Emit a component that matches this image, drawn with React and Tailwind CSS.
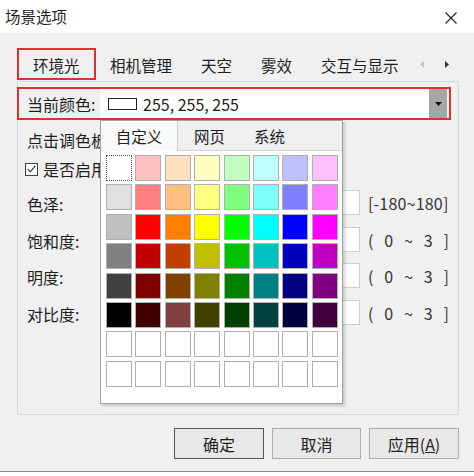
import React from "react";

const palette = [
  ["#ffffff", "#ffc0c0", "#ffe0c0", "#ffffc0", "#c0ffc0", "#c0ffff", "#c0c0ff", "#ffc0ff"],
  ["#e0e0e0", "#ff8080", "#ffc080", "#ffff80", "#80ff80", "#80ffff", "#8080ff", "#ff80ff"],
  ["#c0c0c0", "#ff0000", "#ff8000", "#ffff00", "#00ff00", "#00ffff", "#0000ff", "#ff00ff"],
  ["#808080", "#c00000", "#c04000", "#c0c000", "#00c000", "#00c0c0", "#0000c0", "#c000c0"],
  ["#404040", "#800000", "#804000", "#808000", "#008000", "#008080", "#000080", "#800080"],
  ["#000000", "#400000", "#804040", "#404000", "#004000", "#004040", "#000040", "#400040"],
  Array(8).fill("#ffffff"),
  Array(8).fill("#ffffff"),
];

const tabs = ["相机管理", "天空", "雾效", "交互与显示"];

const fields = [
  { label: "色泽:", range: "wide", mt: "mt-[11px]" },
  { label: "饱和度:", range: "narrow", mt: "mt-[12px]" },
  { label: "明度:", range: "narrow", mt: "mt-[11px]" },
  { label: "对比度:", range: "narrow", mt: "mt-[12px]" },
];

const ColorPopup = () => (
  <div className="absolute left-[82px] top-[38px] z-10 h-[284px] w-[243px] border border-[#a3a3a3] bg-white shadow-[2px_2px_3px_rgba(0,0,0,0.18)]">
    <div className="flex h-[30px] border-b border-[#d4d4d4] bg-[#efefef] text-[15.5px]">
      <div className="-mb-px flex w-[77px] items-center justify-center border-r border-[#cdcdcd] bg-[#f9f9f9] pt-[2px]">
        自定义
      </div>
      <div className="ml-[16px] flex items-center pt-[2px]">网页</div>
      <div className="ml-[29px] flex items-center pt-[2px]">系统</div>
    </div>
    <div className="grid grid-cols-[repeat(8,26px)] gap-[3.4px] pl-[5px] pt-[4px]">
      {palette.flatMap((row, r) =>
        row.map((color, c) => (
          <div
            key={`${r}-${c}`}
            className={
              r === 0 && c === 0
                ? "h-[26px] w-[26px] border border-dotted border-[#555]"
                : "h-[26px] w-[26px] border border-[#b0b0b0]"
            }
            style={{ backgroundColor: color }}
          />
        ))
      )}
    </div>
  </div>
);

export default function App() {
  return (
    <div className="h-[476px] w-[474px] bg-white font-['Noto_Sans_CJK_SC',sans-serif] text-[#1e1e1e]">
      <div className="flex h-[472px] flex-col border-b border-[#8c8c8c] bg-[#f0f0f0]">
        {/* title bar */}
        <div className="flex h-[33px] items-center justify-between bg-white pl-[5px] pr-[17px]">
          <span className="text-[15.5px]">场景选项</span>
          <svg width="12" height="12" viewBox="0 0 12 12" className="mt-[2px]">
            <path d="M0.5 0.5 L11.5 11.5 M11.5 0.5 L0.5 11.5" stroke="#222" strokeWidth="1.1" fill="none" />
          </svg>
        </div>

        <div className="flex-1 pl-[17px] pr-[15px]">
          {/* tab strip */}
          <div className="mt-[15px] flex h-[32px] items-center text-[15.5px]">
            <div className="flex h-[32px] items-center border-2 border-[#e0302f] px-[14px] pt-[4px]">环境光</div>
            {tabs.map((t) => (
              <div key={t} className="flex h-[32px] items-center px-[14.5px] pt-[4px]">
                {t}
              </div>
            ))}
            <div className="ml-auto flex items-center gap-[21px] pr-[10px] pt-[1px]">
              <svg width="4" height="7" viewBox="0 0 4 7">
                <path d="M4 0 L0 3.5 L4 7 Z" fill="#c4c4c4" />
              </svg>
              <svg width="4" height="7" viewBox="0 0 4 7">
                <path d="M0 0 L4 3.5 L0 7 Z" fill="#333" />
              </svg>
            </div>
          </div>

          {/* tab panel */}
          <div className="relative mt-px h-[334px] border border-[#d8d8d8]">
            <div className="-ml-px mt-[5px] flex h-[33px] w-[434px] items-center border-2 border-[#e0302f] text-[16px]">
              <span className="pl-[8px]">当前颜色:</span>
              <div className="ml-auto mr-[2px] flex h-[29px] w-[347px] items-center bg-white">
                <div className="ml-[8px] h-[12px] w-[29px] border border-[#222] bg-white" />
                <span className="ml-[6px] text-[16px]">255, 255, 255</span>
                <div className="ml-auto flex h-[29px] w-[18px] items-center justify-center bg-[#a6a6a6]">
                  <svg width="7" height="4" viewBox="0 0 7 4">
                    <path d="M0 0 L7 0 L3.5 4 Z" fill="#111" />
                  </svg>
                </div>
              </div>
            </div>

            <div className="mt-[10px] h-[20px] pl-[9px] text-[16px] leading-[20px]">点击调色板</div>

            <div className="mt-[9px] flex h-[20px] items-center pl-[7px] text-[16px]">
              <div className="flex h-[13px] w-[13px] items-center justify-center border border-[#444] bg-white">
                <svg width="9" height="8" viewBox="0 0 9 8">
                  <path d="M0.8 4.2 L3.3 6.8 L8.3 0.8" stroke="#222" strokeWidth="1.1" fill="none" />
                </svg>
              </div>
              <span className="ml-[5px]">是否启用</span>
            </div>

            {fields.map((f) => (
              <div key={f.label} className={`${f.mt} flex h-[25px] items-center text-[16px]`}>
                <span className="flex-1 pl-[9px] pt-[3px]">{f.label}</span>
                <div className="h-[25px] w-[250px] border border-[#cfcfcf] bg-white" />
                {f.range === "wide" ? (
                  <span className="ml-[8px] w-[90px] text-[16px] tracking-[0.2px] text-[#333]">[-180~180]</span>
                ) : (
                  <span className="ml-[8px] flex w-[90px] justify-between pr-[9px] text-[16px] text-[#333]">
                    <span>(</span>
                    <span>0</span>
                    <span>~</span>
                    <span>3</span>
                    <span>]</span>
                  </span>
                )}
              </div>
            ))}

            <ColorPopup />
          </div>

          {/* buttons */}
          <div className="mt-[13px] flex justify-end gap-[8px] text-[16px]">
            <button className="flex h-[31px] w-[90px] items-center justify-center border border-[#555] bg-[#e8e8e8]">
              确定
            </button>
            <button className="flex h-[31px] w-[89px] items-center justify-center border border-[#adadad] bg-[#e8e8e8]">
              取消
            </button>
            <button className="flex h-[31px] w-[90px] items-center justify-center border border-[#adadad] bg-[#e8e8e8]">
              应用(<span className="underline">A</span>)
            </button>
          </div>
        </div>
      </div>
    </div>
  );
}
